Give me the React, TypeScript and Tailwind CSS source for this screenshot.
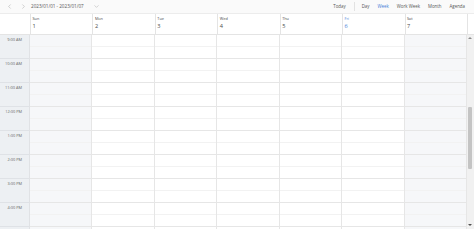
import { ChevronLeft, ChevronRight, ChevronDown } from 'lucide-react';

const DAYS = [
  { name: 'Sun', date: 1, off: true },
  { name: 'Mon', date: 2 },
  { name: 'Tue', date: 3 },
  { name: 'Wed', date: 4 },
  { name: 'Thu', date: 5 },
  { name: 'Fri', date: 6, today: true },
  { name: 'Sat', date: 7, off: true },
];

const HOURS = ['9:00 AM', '10:00 AM', '11:00 AM', '12:00 PM', '1:00 PM', '2:00 PM', '3:00 PM', '4:00 PM', ''];

const VIEWS = ['Day', 'Week', 'Work Week', 'Month', 'Agenda'];

export default function App() {
  return (
    <div className="w-[474px] h-[229px] overflow-hidden bg-white text-[#4b4b4b] font-['Open_Sans',sans-serif]">
      {/* Toolbar */}
      <div className="h-[14px] flex items-center bg-[#fafafa] border-b border-[#ececec]">
        <div className="flex items-center pl-[6px] gap-[7px] text-[#9a9a9a]">
          <ChevronLeft size={7} strokeWidth={1.5} />
          <ChevronRight size={7} strokeWidth={1.5} />
        </div>
        <div className="ml-[4px] flex items-center text-[4.6px] text-[#555]">
          <span>2023/01/01 - 2023/01/07</span>
          <ChevronDown size={7} strokeWidth={1.2} className="ml-[9px] text-[#888]" />
        </div>
        <div className="ml-auto flex items-center text-[4.4px] text-[#555] pr-[5px]">
          <span className="pr-[8px]">Today</span>
          <div className="w-px h-[9px] bg-[#e2e2e2] mr-[3px]" />
          {VIEWS.map((v) => (
            <span key={v} className={v === 'Week' ? 'px-[4px] text-[#3f7bd6]' : 'px-[4px]'}>
              {v}
            </span>
          ))}
        </div>
      </div>

      {/* Header */}
      <div className="flex h-[21px] border-b border-[#e4e4e4]">
        <div className="w-[30px] shrink-0" />
        {DAYS.map((d) => (
          <div
            key={d.name}
            className={`flex-1 border-l border-[#e4e4e4] pl-[1.5px] pt-[3px] leading-none ${d.today ? 'text-[#3f7bd6]' : ''}`}
          >
            <div className="text-[3.8px]">{d.name}</div>
            <div className="text-[5.6px] mt-[3px]">{d.date}</div>
          </div>
        ))}
        <div className="w-[7px] shrink-0 border-l border-[#e4e4e4]" />
      </div>

      {/* Body */}
      <div className="flex h-[194px]">
        <div className="w-[30px] shrink-0 bg-[#edf0f3] border-r border-[#e0e2e5]">
          {HOURS.map((h, i) => (
            <div key={i} className="h-[24px] border-b border-[#dfe2e6] text-[3.9px] text-[#666] text-right pr-[7px] pt-[3px] leading-none">
              {h}
            </div>
          ))}
        </div>
        {DAYS.map((d) => (
          <div key={d.name} className={`flex-1 border-r border-[#e6e6e6] ${d.off ? 'bg-[#f6f7f9]' : 'bg-white'}`}>
            {HOURS.map((h, i) => (
              <div key={i} className="h-[24px]">
                <div className="h-[12px] border-b border-[#f2f2f2]" />
                <div className="h-[12px] border-b border-[#e6e6e6]" />
              </div>
            ))}
          </div>
        ))}
        <div className="w-[7px] shrink-0 bg-[#f1f1f1] flex flex-col items-center">
          <div className="mt-[2px] w-0 h-0 border-l-[2px] border-r-[2px] border-b-[2px] border-l-transparent border-r-transparent border-b-[#8a8a8a]" />
          <div className="mt-[68px] w-[4px] h-[62px] bg-[#c4c4c4] rounded-[1px]" />
          <div className="mt-auto mb-[3px] w-0 h-0 border-l-[2px] border-r-[2px] border-t-[2px] border-l-transparent border-r-transparent border-t-[#505050]" />
        </div>
      </div>
    </div>
  );
}
